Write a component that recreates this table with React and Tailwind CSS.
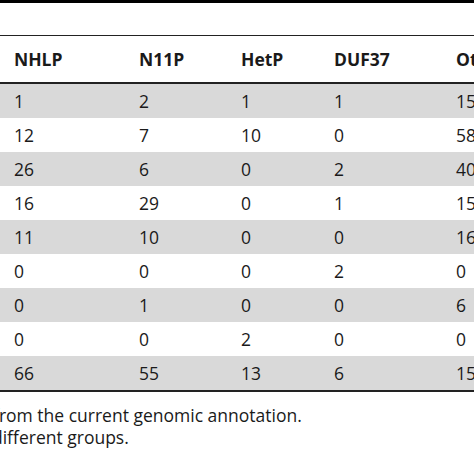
import React from "react";

const rows = [
  ["1", "2", "1", "1", "15"],
  ["12", "7", "10", "0", "58"],
  ["26", "6", "0", "2", "40"],
  ["16", "29", "0", "1", "15"],
  ["11", "10", "0", "0", "16"],
  ["0", "0", "0", "2", "0"],
  ["0", "1", "0", "0", "6"],
  ["0", "0", "2", "0", "0"],
  ["66", "55", "13", "6", "15"],
];

const cols = "grid grid-cols-[125px_102px_93px_122px_120px] pl-[14px]";

export default function App() {
  return (
    <div
      className="w-[474px] h-[474px] overflow-hidden bg-white text-[#1a1a1a]"
      style={{ fontFamily: '"Open Sans", "Noto Sans", sans-serif' }}
    >
      <div className="h-[3px] bg-black" />
      <div className="h-[32px]" />
      <div className="h-[1px] bg-[#222]" />
      <div className={`${cols} h-[46px] items-center font-bold text-[17.5px] whitespace-nowrap`}>
        <div>NHLP</div>
        <div>N11P</div>
        <div>HetP</div>
        <div>DUF37</div>
        <div>Others</div>
      </div>
      <div className="h-[2px] bg-[#222]" />
      {rows.map((r, i) => (
        <div
          key={i}
          className={`${cols} h-[34px] items-center text-[17.5px] whitespace-nowrap ${
            i % 2 === 0 ? "bg-[#d9d9d9]" : "bg-white"
          }`}
        >
          {r.map((c, j) => (
            <div key={j}>{c}</div>
          ))}
        </div>
      ))}
      <div className="h-[2px] bg-[#222]" />
      <div className="ml-[-7px] mt-[12px] text-[17.5px] leading-[22px] whitespace-nowrap">
        <div>from the current genomic annotation.</div>
        <div className="ml-[-1px]">different groups.</div>
      </div>
    </div>
  );
}
